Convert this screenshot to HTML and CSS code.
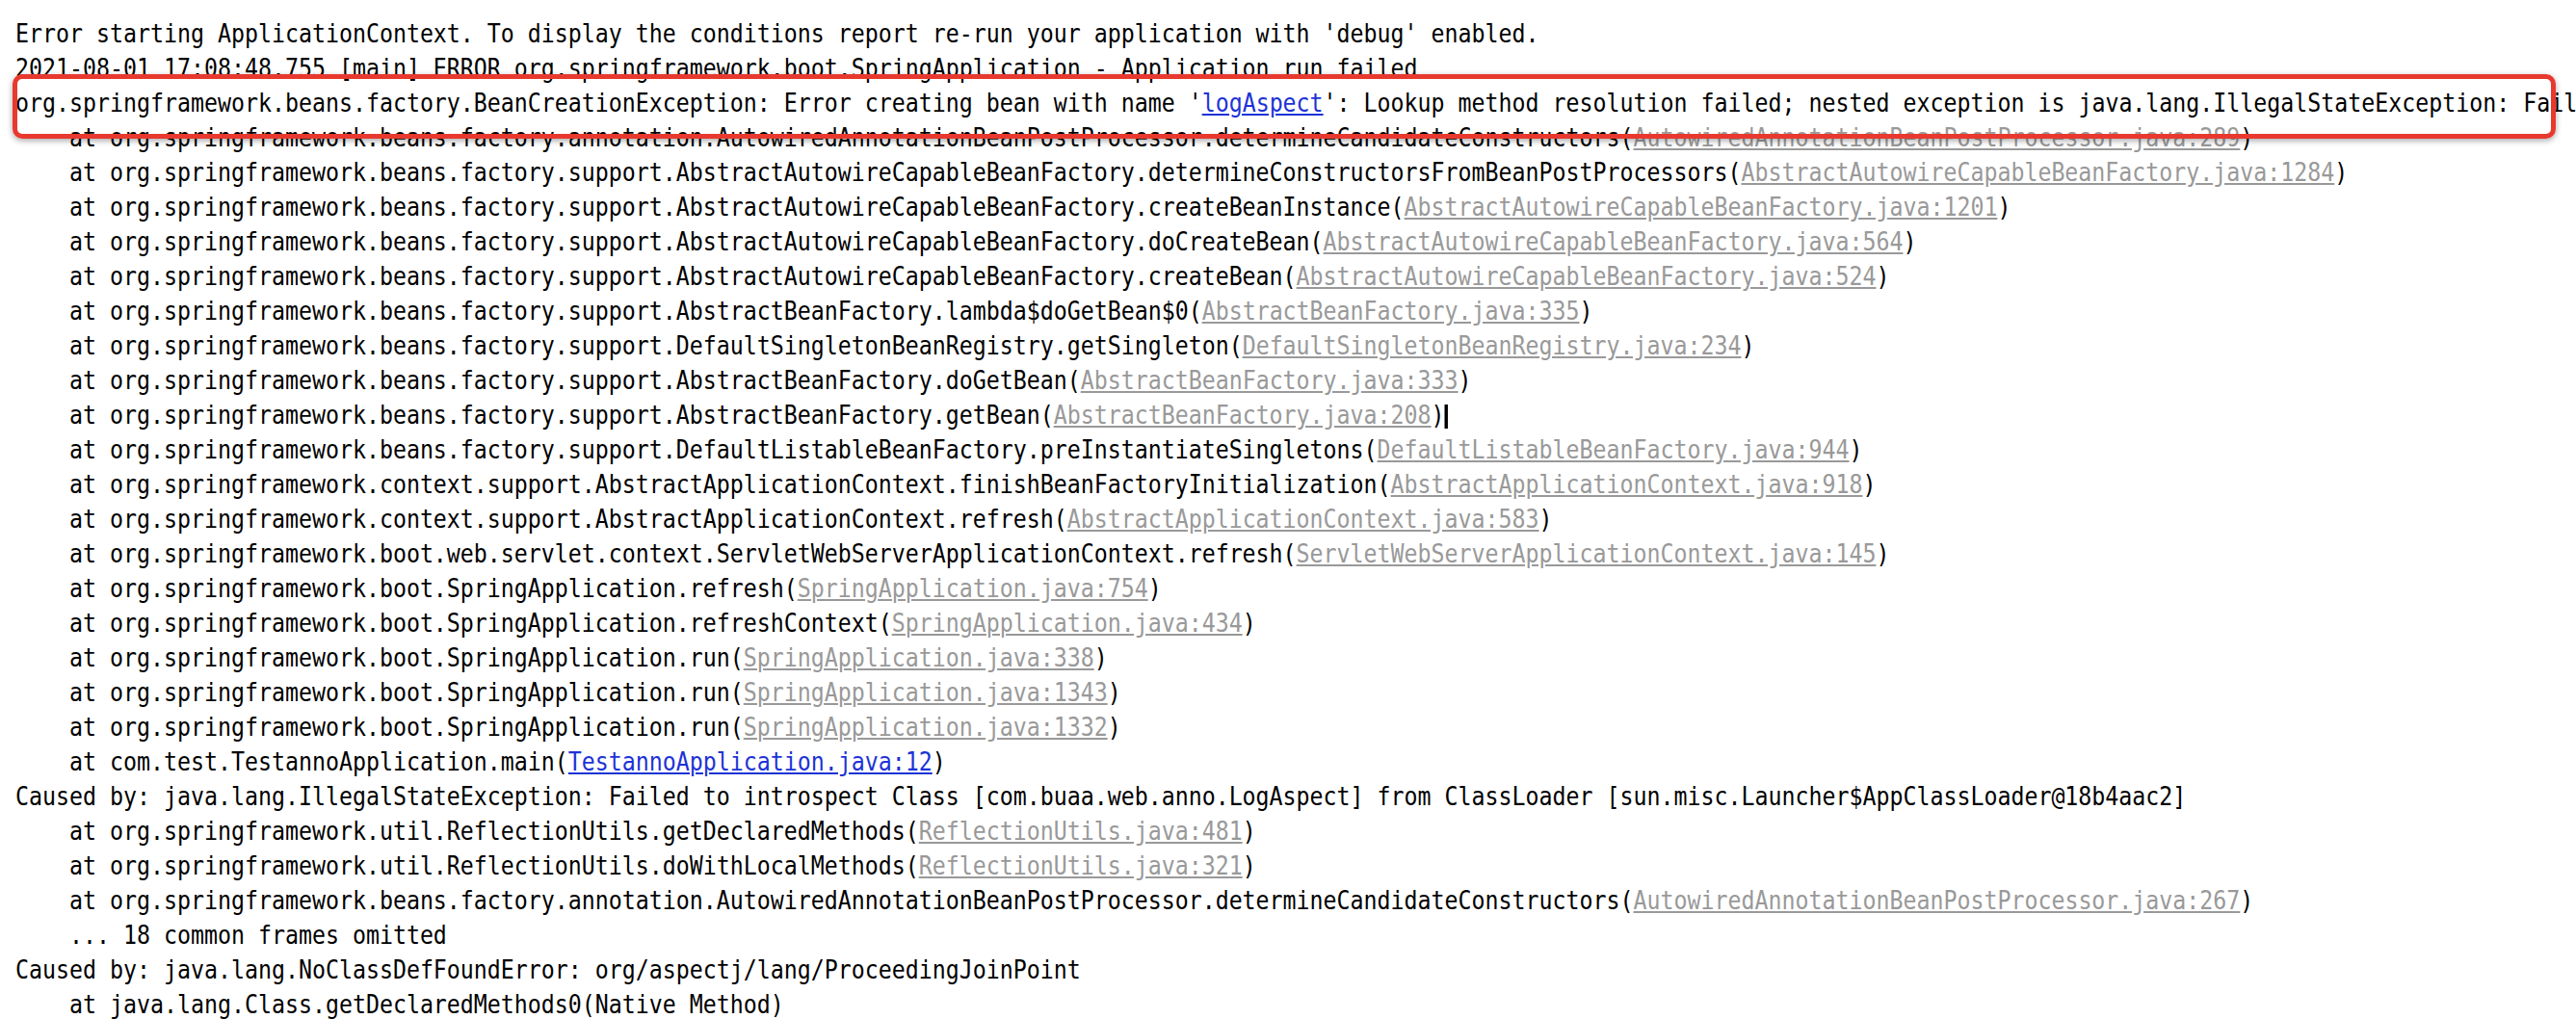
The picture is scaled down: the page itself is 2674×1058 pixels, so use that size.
FILE: index.html
```html
<!DOCTYPE html>
<html lang="en">
<head>
  <meta charset="UTF-8" />
  <title>Run console</title>
  <link rel="stylesheet" href="styles.css">
</head>
<body>
  <div class="console">
    <div class="log">
      <div class="line">Error starting ApplicationContext. To display the conditions report re-run your application with 'debug' enabled.</div>
      <div class="line">2021-08-01 17:08:48.755 [main] ERROR org.springframework.boot.SpringApplication - Application run failed</div>
      <div class="line">org.springframework.beans.factory.BeanCreationException: Error creating bean with name '<a class="link">logAspect</a>': Lookup method resolution failed; nested exception is java.lang.IllegalStateException: Fail</div>
      <div class="line">    at org.springframework.beans.factory.annotation.AutowiredAnnotationBeanPostProcessor.determineCandidateConstructors(<a class="src">AutowiredAnnotationBeanPostProcessor.java:289</a>)</div>
      <div class="line">    at org.springframework.beans.factory.support.AbstractAutowireCapableBeanFactory.determineConstructorsFromBeanPostProcessors(<a class="src">AbstractAutowireCapableBeanFactory.java:1284</a>)</div>
      <div class="line">    at org.springframework.beans.factory.support.AbstractAutowireCapableBeanFactory.createBeanInstance(<a class="src">AbstractAutowireCapableBeanFactory.java:1201</a>)</div>
      <div class="line">    at org.springframework.beans.factory.support.AbstractAutowireCapableBeanFactory.doCreateBean(<a class="src">AbstractAutowireCapableBeanFactory.java:564</a>)</div>
      <div class="line">    at org.springframework.beans.factory.support.AbstractAutowireCapableBeanFactory.createBean(<a class="src">AbstractAutowireCapableBeanFactory.java:524</a>)</div>
      <div class="line">    at org.springframework.beans.factory.support.AbstractBeanFactory.lambda$doGetBean$0(<a class="src">AbstractBeanFactory.java:335</a>)</div>
      <div class="line">    at org.springframework.beans.factory.support.DefaultSingletonBeanRegistry.getSingleton(<a class="src">DefaultSingletonBeanRegistry.java:234</a>)</div>
      <div class="line">    at org.springframework.beans.factory.support.AbstractBeanFactory.doGetBean(<a class="src">AbstractBeanFactory.java:333</a>)</div>
      <div class="line">    at org.springframework.beans.factory.support.AbstractBeanFactory.getBean(<a class="src">AbstractBeanFactory.java:208</a>)<span class="caret"></span></div>
      <div class="line">    at org.springframework.beans.factory.support.DefaultListableBeanFactory.preInstantiateSingletons(<a class="src">DefaultListableBeanFactory.java:944</a>)</div>
      <div class="line">    at org.springframework.context.support.AbstractApplicationContext.finishBeanFactoryInitialization(<a class="src">AbstractApplicationContext.java:918</a>)</div>
      <div class="line">    at org.springframework.context.support.AbstractApplicationContext.refresh(<a class="src">AbstractApplicationContext.java:583</a>)</div>
      <div class="line">    at org.springframework.boot.web.servlet.context.ServletWebServerApplicationContext.refresh(<a class="src">ServletWebServerApplicationContext.java:145</a>)</div>
      <div class="line">    at org.springframework.boot.SpringApplication.refresh(<a class="src">SpringApplication.java:754</a>)</div>
      <div class="line">    at org.springframework.boot.SpringApplication.refreshContext(<a class="src">SpringApplication.java:434</a>)</div>
      <div class="line">    at org.springframework.boot.SpringApplication.run(<a class="src">SpringApplication.java:338</a>)</div>
      <div class="line">    at org.springframework.boot.SpringApplication.run(<a class="src">SpringApplication.java:1343</a>)</div>
      <div class="line">    at org.springframework.boot.SpringApplication.run(<a class="src">SpringApplication.java:1332</a>)</div>
      <div class="line">    at com.test.TestannoApplication.main(<a class="link">TestannoApplication.java:12</a>)</div>
      <div class="line">Caused by: java.lang.IllegalStateException: Failed to introspect Class [com.buaa.web.anno.LogAspect] from ClassLoader [sun.misc.Launcher$AppClassLoader@18b4aac2]</div>
      <div class="line">    at org.springframework.util.ReflectionUtils.getDeclaredMethods(<a class="src">ReflectionUtils.java:481</a>)</div>
      <div class="line">    at org.springframework.util.ReflectionUtils.doWithLocalMethods(<a class="src">ReflectionUtils.java:321</a>)</div>
      <div class="line">    at org.springframework.beans.factory.annotation.AutowiredAnnotationBeanPostProcessor.determineCandidateConstructors(<a class="src">AutowiredAnnotationBeanPostProcessor.java:267</a>)</div>
      <div class="line">    ... 18 common frames omitted</div>
      <div class="line">Caused by: java.lang.NoClassDefFoundError: org/aspectj/lang/ProceedingJoinPoint</div>
      <div class="line">    at java.lang.Class.getDeclaredMethods0(Native Method)</div>
    </div>
  </div>
  <!-- red annotation drawn over the exception line -->
  <div class="highlight"></div>
</body>
</html>
```

FILE: styles.css
```css
* {
  margin: 0;
  padding: 0;
  box-sizing: border-box;
}

html,
body {
  height: 100%;
}

body {
  background: #ffffff;
  overflow: hidden;
  position: relative;
}

.console {
  padding: 17px 0 0 16px;
}

/* console font is narrow and tall, so squeeze a mono font horizontally */
.log {
  font-family: "DejaVu Sans Mono", "Liberation Mono", monospace;
  font-size: 27px;
  line-height: 36px;
  color: #000000;
  transform: scaleX(0.861);
  transform-origin: 0 0;
}

.line {
  white-space: pre;
}

.src {
  color: #999999;
  text-decoration: underline;
}

.link {
  color: #1d33d6;
  text-decoration: underline;
}

.caret {
  display: inline-block;
  width: 4px;
  height: 25px;
  background: #000000;
  vertical-align: -5px;
}

.highlight {
  position: absolute;
  left: 13px;
  top: 77px;
  width: 2640px;
  height: 67px;
  border: 5px solid #e8392f;
  border-radius: 10px;
  box-shadow: 0 2px 6px rgba(0, 0, 0, 0.35);
}
```
